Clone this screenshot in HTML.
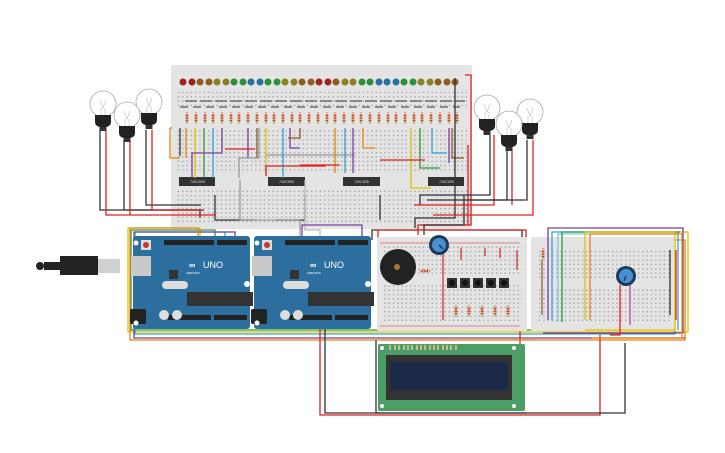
<!DOCTYPE html>
<html><head><meta charset="utf-8"><style>
html,body{margin:0;padding:0;background:#fff;width:725px;height:453px;overflow:hidden}
svg{display:block}
text{font-family:"Liberation Sans",sans-serif}
</style></head><body>
<svg width="725" height="453" viewBox="0 0 725 453" xmlns="http://www.w3.org/2000/svg">
<defs>
<pattern id="holes" width="4.3" height="4.3" patternUnits="userSpaceOnUse"><rect x="1.5" y="1.5" width="1.4" height="1.4" fill="#a5a5a5"/></pattern>
<g id="res"><rect x="-1.3" y="-6" width="2.6" height="12" rx="1" fill="#d8b58a"/><rect x="-1.3" y="-3" width="2.6" height="1.2" fill="#d22"/><rect x="-1.3" y="-0.5" width="2.6" height="1.2" fill="#d22"/><rect x="-1.3" y="2" width="2.6" height="1.2" fill="#8a5a20"/></g>
<g id="bulb"><circle cx="0" cy="-9" r="13" fill="#fff" stroke="#aaa" stroke-width="0.8"/><path d="M-3-13 L0-5 L3-13 M-2-5 L-2 3 M2-5 L2 3" stroke="#bbb" stroke-width="0.6" fill="none"/><path d="M-8 2 H8 V9 Q8 13 3 14 H-3 Q-8 13 -8 9Z" fill="#222"/><rect x="-3.5" y="14" width="7" height="4" fill="#333"/></g>
<g id="ard"><rect x="0" y="0" width="117" height="93" rx="3" fill="#2c6f9f"/><rect x="-2" y="20" width="20" height="20" fill="#c9c9c9"/><rect x="-3" y="73" width="16" height="15" rx="2" fill="#222"/><rect x="8" y="4" width="10" height="10" fill="#ddd"/><circle cx="13" cy="9" r="3" fill="#c33"/><rect x="31" y="4" width="50" height="5" fill="#222"/><rect x="84" y="4" width="30" height="5" fill="#222"/><rect x="35" y="79" width="43" height="5" fill="#222"/><rect x="81" y="79" width="33" height="5" fill="#222"/><rect x="54" y="56" width="66" height="14" fill="#333"/><rect x="36" y="34" width="9" height="9" fill="#333"/><rect x="29" y="45" width="26" height="8" rx="4" fill="#ddd"/><circle cx="31" cy="79" r="5" fill="#ddd"/><circle cx="44" cy="79" r="5" fill="#ddd"/><text x="70" y="32" font-size="9" fill="#fff">UNO</text><text x="56" y="32" font-size="9" fill="#fff" font-weight="bold">∞</text><text x="53" y="38" font-size="3" fill="#fff">ARDUINO</text><circle cx="3" cy="7" r="2.5" fill="#fff"/><circle cx="114" cy="48" r="3" fill="#fff"/><circle cx="3" cy="87" r="2.5" fill="#fff"/></g>
</defs>
<rect x="171" y="65" width="301" height="164" rx="2" fill="#e4e4e4"/>
<rect x="176" y="91" width="291" height="16" fill="url(#holes)"/>
<rect x="176" y="128" width="291" height="44" fill="url(#holes)"/>
<rect x="176" y="188" width="291" height="35" fill="url(#holes)"/>
<g stroke="#333" stroke-width="1"><path d="M185 101h12M200 101h12M215 101h12M230 101h12M245 101h12M260 101h12M275 101h12M290 101h12M305 101h12M320 101h12M335 101h12M350 101h12M365 101h12M380 101h12M395 101h12M410 101h12M425 101h12M440 101h12M455 101h10"/><path d="M180 107h280" stroke-dasharray="8 5"/></g>
<g>
<circle cx="183" cy="82" r="3.5" fill="#9e2222"/><circle cx="192" cy="82" r="3.5" fill="#9e2222"/><circle cx="200" cy="82" r="3.5" fill="#8c5e22"/><circle cx="209" cy="82" r="3.5" fill="#8c5e22"/><circle cx="217" cy="82" r="3.5" fill="#8d8022"/><circle cx="226" cy="82" r="3.5" fill="#8d8022"/><circle cx="234" cy="82" r="3.5" fill="#2e8f3a"/><circle cx="243" cy="82" r="3.5" fill="#2e8f3a"/><circle cx="251" cy="82" r="3.5" fill="#2a70a0"/><circle cx="260" cy="82" r="3.5" fill="#2a70a0"/><circle cx="268" cy="82" r="3.5" fill="#2e8f3a"/><circle cx="277" cy="82" r="3.5" fill="#2e8f3a"/><circle cx="285" cy="82" r="3.5" fill="#8d8022"/><circle cx="294" cy="82" r="3.5" fill="#8d8022"/><circle cx="302" cy="82" r="3.5" fill="#8c5e22"/><circle cx="311" cy="82" r="3.5" fill="#8c5e22"/><circle cx="319" cy="82" r="3.5" fill="#9e2222"/><circle cx="328" cy="82" r="3.5" fill="#9e2222"/><circle cx="336" cy="82" r="3.5" fill="#8c5e22"/><circle cx="345" cy="82" r="3.5" fill="#8d8022"/><circle cx="353" cy="82" r="3.5" fill="#8d8022"/><circle cx="362" cy="82" r="3.5" fill="#2e8f3a"/><circle cx="370" cy="82" r="3.5" fill="#2e8f3a"/><circle cx="379" cy="82" r="3.5" fill="#2a70a0"/><circle cx="387" cy="82" r="3.5" fill="#2a70a0"/><circle cx="396" cy="82" r="3.5" fill="#2a70a0"/><circle cx="404" cy="82" r="3.5" fill="#2e8f3a"/><circle cx="413" cy="82" r="3.5" fill="#2e8f3a"/><circle cx="421" cy="82" r="3.5" fill="#8d8022"/><circle cx="430" cy="82" r="3.5" fill="#8d8022"/><circle cx="438" cy="82" r="3.5" fill="#8c5e22"/><circle cx="447" cy="82" r="3.5" fill="#8c5e22"/><circle cx="455" cy="82" r="3.5" fill="#8c5e22"/>
</g>
<g>
<use href="#res" x="187" y="118"/><use href="#res" x="196" y="118"/><use href="#res" x="205" y="118"/><use href="#res" x="213" y="118"/><use href="#res" x="222" y="118"/><use href="#res" x="231" y="118"/><use href="#res" x="239" y="118"/><use href="#res" x="248" y="118"/><use href="#res" x="257" y="118"/><use href="#res" x="266" y="118"/><use href="#res" x="274" y="118"/><use href="#res" x="283" y="118"/><use href="#res" x="292" y="118"/><use href="#res" x="300" y="118"/><use href="#res" x="309" y="118"/><use href="#res" x="318" y="118"/><use href="#res" x="327" y="118"/><use href="#res" x="335" y="118"/><use href="#res" x="344" y="118"/><use href="#res" x="353" y="118"/><use href="#res" x="361" y="118"/><use href="#res" x="370" y="118"/><use href="#res" x="379" y="118"/><use href="#res" x="388" y="118"/><use href="#res" x="396" y="118"/><use href="#res" x="405" y="118"/><use href="#res" x="414" y="118"/><use href="#res" x="422" y="118"/><use href="#res" x="431" y="118"/><use href="#res" x="440" y="118"/><use href="#res" x="449" y="118"/><use href="#res" x="457" y="118"/>
</g>
<g fill="#333"><rect x="179" y="177" width="36" height="9"/><rect x="268" y="177" width="37" height="9"/><rect x="343" y="177" width="37" height="9"/><rect x="428" y="177" width="36" height="9"/></g>
<g font-size="3.5" fill="#ddd"><text x="190" y="183">74HC595</text><text x="279" y="183">74HC595</text><text x="354" y="183">74HC595</text><text x="439" y="183">74HC595</text></g>
<g fill="none" stroke-width="1.3">
<path d="M172 128h-2v30h10" stroke="#e8860f"/><path d="M186 128v30" stroke="#e8860f"/>
<path d="M195 128v50" stroke="#e3c000"/><path d="M204 128v50" stroke="#2a9e3a"/><path d="M213 128v50" stroke="#33a0d8"/><path d="M222 128v25h-30v25" stroke="#7b3fa0"/><path d="M248 128v30" stroke="#7b3fa0"/><path d="M257 128v30" stroke="#8b5a2b"/>
<path d="M259 128v30h-20v20" stroke="#9a9a9a"/><path d="M265 155h90" stroke="#9a9a9a"/>
<path d="M266 128v45" stroke="#e3c000"/><path d="M283 128v50" stroke="#33a0d8"/><path d="M290 128v20h10" stroke="#7b3fa0"/><path d="M300 128v10h-12" stroke="#8b5a2b"/><path d="M335 128v45" stroke="#e8860f"/><path d="M345 128v45" stroke="#33a0d8"/><path d="M353 128v45" stroke="#7b3fa0"/><path d="M363 128v20h12" stroke="#e8860f"/>
<path d="M411 128v60h20" stroke="#e3c000"/><path d="M420 128v40h20" stroke="#2a9e3a"/><path d="M432 128v25h15" stroke="#33a0d8"/><path d="M449 128v35" stroke="#7b3fa0"/><path d="M452 128v30h12" stroke="#8b5a2b"/>
<path d="M225 149h30" stroke="#d22"/><path d="M300 165h40" stroke="#d22"/><path d="M380 160h45" stroke="#d22"/><path d="M266 176v-10h60" stroke="#d22"/>
<path d="M180 128v28" stroke="#333"/><path d="M215 195v25h40" stroke="#333"/><path d="M305 195v25h-30" stroke="#333"/><path d="M380 195v25" stroke="#333"/>
<path d="M465 75h6v150h-50" stroke="#d22"/><path d="M455 78v140h-40v10" stroke="#333"/><path d="M468 145v80h-50v10" stroke="#d22"/><path d="M464 195v30h-40v10" stroke="#333"/>
<path d="M240 180v40h60v20" stroke="#9a9a9a"/><path d="M305 180v50h15v10" stroke="#bbb"/>
<path d="M100 130v80h100v8" stroke="#333"/><path d="M106 130v85h110" stroke="#d22"/><path d="M124 140v70h80" stroke="#333"/><path d="M130 140v75" stroke="#d22"/><path d="M146 130v75h55" stroke="#333"/><path d="M152 130v80h50" stroke="#d22"/>
<path d="M490 135v60h-70v10" stroke="#333"/><path d="M494 135v70h-80" stroke="#d22"/><path d="M507 150v50h-80" stroke="#333"/><path d="M512 150v55" stroke="#d22"/><path d="M527 140v60h-60" stroke="#333"/><path d="M533 140v75h-100" stroke="#d22"/>
</g>
<use href="#bulb" x="103" y="113"/><use href="#bulb" x="149" y="111"/><use href="#bulb" x="127" y="124"/>
<use href="#bulb" x="487" y="117"/><use href="#bulb" x="530" y="121"/><use href="#bulb" x="509" y="133"/>
<rect x="98" y="259" width="22" height="14" fill="#d0d0d0"/>
<path d="M60 256h38v19h-38z" fill="#222"/><rect x="44" y="262" width="18" height="8" fill="#222"/><circle cx="40" cy="266" r="4" fill="#222"/>
<g fill="none" stroke-width="1.3">
<path d="M200 236v-8h-72v104h560v-100h-100" stroke="#e3c000"/><path d="M215 236v-6h-84v100h540v-90h-80" stroke="#2a9e3a"/><path d="M225 236v-4h-90v102h540v-94h-100" stroke="#33a0d8"/><path d="M235 236v-4h-101v106h552" stroke="#7b3fa0"/><path d="M198 236v-8h-68v112h555v-100h-100" stroke="#e8860f"/>
<path d="M302 240v-15h60v95h-60" stroke="#7b3fa0"/><path d="M320 325v90h280v-80" stroke="#d22"/><path d="M325 325v88h300v-70" stroke="#333"/>
<path d="M372 240v-10h150v75" stroke="#333"/><path d="M378 238v-8h148v90" stroke="#d22"/><path d="M370 245v80" stroke="#333"/>
<path d="M380 345v65h140v-80" stroke="#d22"/><path d="M376 340v73h150" stroke="#333"/><path d="M380 340h155" stroke="#e8860f"/>
</g>
<use href="#ard" x="133" y="236"/><use href="#ard" x="254" y="236"/>
<rect x="377" y="237" width="150" height="94" rx="2" fill="#e4e4e4"/>
<rect x="382" y="246" width="140" height="30" fill="url(#holes)"/><rect x="382" y="285" width="140" height="37" fill="url(#holes)"/>
<path d="M380 243h140M380 326h140" stroke="#d22" stroke-width="0.6"/>
<circle cx="398" cy="267" r="18" fill="#222"/><circle cx="397" cy="267" r="3" fill="#a07a30"/>
<use href="#res" x="425" y="271" transform="rotate(90 425 271)"/>
<circle cx="439" cy="245" r="10" fill="#1b3b5a"/><circle cx="439" cy="245" r="7" fill="#4a8fd0"/><path d="M439 245l4 4" stroke="#1b3b5a" stroke-width="1.5"/>
<g fill="#333"><rect x="447" y="278" width="10" height="10"/><rect x="460" y="278" width="10" height="10"/><rect x="473" y="278" width="10" height="10"/><rect x="486" y="278" width="10" height="10"/><rect x="499" y="278" width="10" height="10"/></g>
<g fill="#111"><circle cx="452" cy="283" r="3"/><circle cx="465" cy="283" r="3"/><circle cx="478" cy="283" r="3"/><circle cx="491" cy="283" r="3"/><circle cx="504" cy="283" r="3"/></g>
<use href="#res" x="456" y="311"/><use href="#res" x="469" y="311"/><use href="#res" x="482" y="311"/><use href="#res" x="495" y="311"/><use href="#res" x="508" y="311"/>
<g stroke="#d22" stroke-width="1.2"><path d="M443 254v66M461 248v12M485 248v8M500 248v10M517 250v20"/></g>
<rect x="531" y="237" width="145" height="94" rx="2" fill="#e4e4e4"/>
<rect x="536" y="248" width="136" height="30" fill="url(#holes)"/><rect x="536" y="288" width="136" height="35" fill="url(#holes)"/>
<use href="#res" x="543" y="254"/>
<path d="M542 260v55" stroke="#8b5a2b" stroke-width="1.2"/>
<g fill="none" stroke-width="1.3">
<path d="M548 320v-92h135v105h-140" stroke="#7b3fa0"/><path d="M552 320v-88h126v98" stroke="#33a0d8"/><path d="M558 322v-88h120" stroke="#7ec6da"/><path d="M562 322v-90h118" stroke="#2a9e3a"/><path d="M585 320v-88h90v98h-90" stroke="#e3c000"/><path d="M590 320v-86h92v104h-90" stroke="#e8860f"/>
<path d="M670 250v65" stroke="#333"/><path d="M676 250v70" stroke="#d22"/><path d="M620 285v50h-10" stroke="#d22"/><path d="M630 285v40" stroke="#b04ab0"/>
</g>
<circle cx="626" cy="276" r="10" fill="#1b3b5a"/><circle cx="626" cy="276" r="7" fill="#4a8fd0"/><path d="M626 276l-2 5" stroke="#1b3b5a" stroke-width="1.5"/>
<rect x="378" y="344" width="147" height="67" rx="2" fill="#4a9e66"/>
<rect x="386" y="355" width="126" height="45" fill="#333"/><rect x="390" y="362" width="118" height="28" fill="#1c2a48"/>
<g fill="#fff"><circle cx="382" cy="348" r="2"/><circle cx="514" cy="348" r="2"/><circle cx="382" cy="406" r="2"/><circle cx="514" cy="406" r="2"/></g>
<g fill="#c9b98a"><rect x="389" y="345" width="2" height="5"/><rect x="394" y="345" width="2" height="5"/><rect x="398" y="345" width="2" height="5"/><rect x="403" y="345" width="2" height="5"/><rect x="407" y="345" width="2" height="5"/><rect x="411" y="345" width="2" height="5"/><rect x="416" y="345" width="2" height="5"/><rect x="420" y="345" width="2" height="5"/><rect x="424" y="345" width="2" height="5"/><rect x="429" y="345" width="2" height="5"/><rect x="433" y="345" width="2" height="5"/><rect x="437" y="345" width="2" height="5"/><rect x="442" y="345" width="2" height="5"/><rect x="446" y="345" width="2" height="5"/><rect x="450" y="345" width="2" height="5"/><rect x="455" y="345" width="2" height="5"/></g>
</svg>
</body></html>
